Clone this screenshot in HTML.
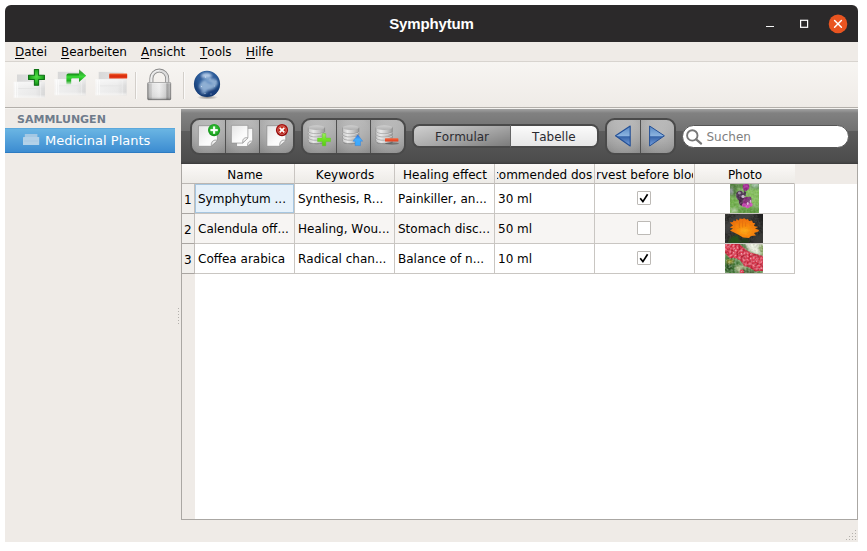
<!DOCTYPE html>
<html lang="de">
<head>
<meta charset="utf-8">
<title>Symphytum</title>
<style>
html,body{margin:0;padding:0;background:#fff;}
body{width:867px;height:551px;position:relative;overflow:hidden;font-family:"DejaVu Sans","Liberation Sans",sans-serif;font-size:12px;color:#000;font-kerning:none;}
*{box-sizing:border-box;}
#win div,#win span,#win svg{position:absolute;}
#win{position:absolute;left:0;top:0;width:867px;height:551px;background:#efebe7;clip-path:inset(5px 9px 9px 5px round 6px 6px 0 0);}
#title{left:0;top:0;width:867px;height:42px;background:#2b292a;}
#title .t{left:5px;width:853px;top:15px;text-align:center;color:#fff;font:bold 15px "Liberation Sans",sans-serif;line-height:17px;letter-spacing:-0.15px;}
#menubar{left:0;top:42px;width:867px;height:19px;background:#efebe7;}
#menubar span{top:3px;line-height:14px;font-size:12px;color:#000;white-space:nowrap;}
#menubar u{text-decoration:underline;text-underline-offset:2px;text-decoration-thickness:1px;}
#tb{left:0;top:61px;width:867px;height:47px;background:linear-gradient(#f7f5f2,#efebe7);border-top:1px solid #d8d4cf;border-bottom:1px solid #b3afaa;}
#hl{left:0;top:108px;width:867px;height:1px;background:#f5f3f0;}
.sep{width:2px;height:27px;top:72px;border-left:1px solid #d3cfca;border-right:1px solid #fbfaf9;}
#side{left:0;top:108px;width:181px;height:443px;background:#efebe7;}
#hdr{left:17px;top:113px;font:bold 11px "DejaVu Sans","Liberation Sans",sans-serif;line-height:14px;color:#6f7c8c;white-space:nowrap;}
#item{left:0;top:128px;width:175px;height:25px;background:linear-gradient(#6ab5e3,#3c8cd1);border-top:1px solid #5ba8dc;border-bottom:1px solid #2d7bc2;}
#item span{left:45px;top:4px;font-size:13px;line-height:16px;color:#fff;white-space:nowrap;}
#dark{left:181px;top:109px;width:686px;height:55px;background:linear-gradient(#a2a2a2 0px,#929292 2px,#818181 4px,#717171 21.5px,#5c5c5c 22.5px,#4c4c4c 52px,#444 54px,#383838 55px);}
.grp{top:118px;height:37px;border:2px solid #4a4a4a;border-radius:9.5px;background:linear-gradient(#b4b4b4,#929292);overflow:hidden;}
.grp i{position:absolute;top:-2px;width:1.4px;height:37px;background:#505050;}
.seg{top:124px;height:24px;border:2px solid #4a4a4a;white-space:nowrap;text-align:center;line-height:22px;font-size:12px;}
#tbl{left:181px;top:164px;width:677px;height:356px;background:#fff;border:1px solid #aaa7a3;border-top:none;}
#tbl .vh{left:0;top:0;width:13px;height:355px;background:#efebe7;}
#tbl .hh{left:0;top:0;width:675px;height:19px;background:#efebe7;}
#tbl .hc{top:0;height:20px;width:100px;background:linear-gradient(#fbf9f7,#edebe7);border-right:1px solid #c9c5c1;border-bottom:1px solid #bab6b2;background-clip:border-box;}
#tbl .hc b{position:absolute;left:2px;right:1px;top:0;height:19px;padding-top:2px;overflow:hidden;font-weight:normal;display:flex;justify-content:center;white-space:nowrap;line-height:19px;}
#tbl .rh{left:0;width:13px;height:30px;background:#f1efec;border-right:1px solid #c2beba;border-bottom:1px solid #a9a5a1;line-height:33px;padding-left:2px;}
#tbl .c{height:30px;width:100px;border-right:1px solid #c9c6c2;border-bottom:1px solid #c9c6c2;line-height:31px;padding-left:3px;white-space:nowrap;overflow:hidden;}
#tbl .sel{width:99px;height:29px;border:1px solid #a6c6e0;background:#e6f1fa;line-height:29px;padding-left:2px;white-space:nowrap;overflow:hidden;}
#tbl .alt{background:#f7f5f3;}
#tbl .cb{width:14px;height:14px;border:1px solid #bdbab6;background:#fff;border-radius:1px;}
</style>
</head>
<body>
<div id="win">
  <div id="title"><div class="t">Symphytum</div>
    <svg style="left:760px;top:10px" width="100" height="28" viewBox="0 0 100 28">
      <rect x="6" y="16" width="8" height="1" fill="#f4f4f4"/>
      <rect x="40.600" y="10.300" width="7" height="7" fill="none" stroke="#fff" stroke-width="1.200"/>
      <circle cx="78" cy="13.900" r="9.300" fill="#e95420"/>
      <line x1="74.6" y1="10.5" x2="81.4" y2="17.300" stroke="#fff" stroke-width="1.500" stroke-linecap="round"/><line x1="81.4" y1="10.5" x2="74.6" y2="17.300" stroke="#fff" stroke-width="1.500" stroke-linecap="round"/>
    </svg>
  </div>
  <div id="menubar">
    <span style="left:15px"><u>D</u>atei</span>
    <span style="left:61px"><u>B</u>earbeiten</span>
    <span style="left:141px"><u>A</u>nsicht</span>
    <span style="left:200px"><u>T</u>ools</span>
    <span style="left:246px"><u>H</u>ilfe</span>
  </div>
  <div id="tb"></div>
  <svg style="left:10px;top:64px" width="220" height="42" viewBox="10 64 220 42">
<defs>
<linearGradient id="tray" x1="0" y1="0" x2="1" y2="0"><stop offset="0" stop-color="#f6f5f4"/><stop offset="0.12" stop-color="#efefef"/><stop offset="0.7" stop-color="#e9e9e9"/><stop offset="1" stop-color="#d6d6d6"/></linearGradient>
<linearGradient id="trayv" x1="0" y1="0" x2="0" y2="1"><stop offset="0" stop-color="#fff" stop-opacity="0.55"/><stop offset="0.4" stop-color="#fff" stop-opacity="0.1"/><stop offset="0.8" stop-color="#fff" stop-opacity="0"/><stop offset="1" stop-color="#f4f2ef" stop-opacity="0.9"/></linearGradient>
<linearGradient id="pap" x1="0" y1="0" x2="1" y2="0"><stop offset="0" stop-color="#d8d8d8"/><stop offset="1" stop-color="#e8e8e8"/></linearGradient>
<radialGradient id="grn" cx="0.5" cy="0.45" r="0.6"><stop offset="0" stop-color="#52e046"/><stop offset="0.55" stop-color="#2ab428"/><stop offset="1" stop-color="#128214"/></radialGradient>
<linearGradient id="grn2" x1="0" y1="0" x2="0" y2="1"><stop offset="0" stop-color="#0e8410"/><stop offset="0.3" stop-color="#3ddc3a"/><stop offset="0.65" stop-color="#1fae20"/><stop offset="1" stop-color="#22b422" stop-opacity="0.15"/></linearGradient>
<linearGradient id="grn3" x1="0" y1="0" x2="0" y2="1"><stop offset="0" stop-color="#7d9a7d"/><stop offset="0.3" stop-color="#2fae2f"/><stop offset="0.6" stop-color="#3cdc3a"/><stop offset="1" stop-color="#128a12"/></linearGradient>
<linearGradient id="red" x1="0" y1="0" x2="0" y2="1"><stop offset="0" stop-color="#f4662e"/><stop offset="0.5" stop-color="#d8280c"/><stop offset="1" stop-color="#e84420"/></linearGradient>
<linearGradient id="lockb" x1="0" y1="0" x2="1" y2="0"><stop offset="0" stop-color="#909090"/><stop offset="0.06" stop-color="#bdbdbd"/><stop offset="0.17" stop-color="#cfcfcf"/><stop offset="0.19" stop-color="#e2e2e2"/><stop offset="0.5" stop-color="#f0f0f0"/><stop offset="0.8" stop-color="#d2d2d2"/><stop offset="0.83" stop-color="#9c9c9c"/><stop offset="0.95" stop-color="#b8b8b8"/><stop offset="1" stop-color="#8c8c8c"/></linearGradient>
<linearGradient id="lockv" x1="0" y1="0" x2="0" y2="1"><stop offset="0" stop-color="#fff" stop-opacity="0.5"/><stop offset="0.1" stop-color="#fff" stop-opacity="0"/><stop offset="0.85" stop-color="#000" stop-opacity="0.05"/><stop offset="1" stop-color="#000" stop-opacity="0.3"/></linearGradient>
<radialGradient id="glb" cx="0.5" cy="0.3" r="0.8"><stop offset="0" stop-color="#5c88bc"/><stop offset="0.4" stop-color="#2a5a98"/><stop offset="0.8" stop-color="#143a72"/><stop offset="1" stop-color="#0c2e60"/></radialGradient>
<radialGradient id="shd" cx="0.5" cy="0.5" r="0.5"><stop offset="0" stop-color="#000" stop-opacity="0.4"/><stop offset="1" stop-color="#000" stop-opacity="0"/></radialGradient>
<clipPath id="gclip"><circle cx="207" cy="83.9" r="13.1"/></clipPath><filter id="gblur" x="-20%" y="-20%" width="140%" height="140%"><feGaussianBlur stdDeviation="1.1"/></filter>
<g id="trayi">
<rect x="3.3" y="0" width="25" height="8" fill="url(#pap)"/>
<rect x="0" y="7.3" width="31.2" height="16.2" fill="url(#tray)"/>
<rect x="0" y="7.3" width="31.2" height="16.2" fill="url(#trayv)"/>
<rect x="1.5" y="8" width="0.8" height="15" fill="#fff" opacity="0.8"/>
<rect x="3.6" y="8" width="0.8" height="15" fill="#fff" opacity="0.7"/>
<rect x="26.4" y="8" width="0.8" height="15" fill="#fff" opacity="0.4"/>
<rect x="4.5" y="13.6" width="22" height="0.8" fill="#e4e4e4"/>
</g>
</defs>
<!-- icon1 -->
<use href="#trayi" x="13.7" y="74.5"/>
<path d="M34.4 69.5h4.2v5.8h5.8v4.2h-5.8v5.8h-4.2v-5.8h-5.8v-4.2h5.8z" fill="url(#grn)" stroke="#0e7214" stroke-width="1.100" stroke-linejoin="round"/>
<!-- icon2 -->
<use href="#trayi" x="54.5" y="71.8"/>
<path d="M66.400 84.600V75.600q0-2 2-2h10.600v4.600h-6.800q-1 0-1 1v5.400z" fill="url(#grn2)"/>
<path d="M79 69.2l7.2 6.5l-7.2 6.2z" fill="url(#grn3)"/>
<!-- icon3 -->
<use href="#trayi" x="95.4" y="71.9"/>
<rect x="109.2" y="73.4" width="18" height="5.1" rx="0.6" fill="url(#red)"/>
<!-- lock -->
<path d="M151.4 83.5V78.5a7.9 7.9 0 0 1 15.8 0V83.5" fill="none" stroke="#888" stroke-width="4"/>
<path d="M151.4 83.5V78.5a7.9 7.9 0 0 1 15.8 0V83.5" fill="none" stroke="#dcdcdc" stroke-width="2.4"/>
<path d="M151.1 83.5V78.5a8.2 8.2 0 0 1 8.2 -8.2" fill="none" stroke="#f6f6f6" stroke-width="1"/>
<rect x="147.7" y="82.500" width="23" height="17.200" rx="0.8" fill="url(#lockb)" stroke="#7e7e7e" stroke-width="0.8"/>
<rect x="147.7" y="82.500" width="23" height="17.200" rx="0.8" fill="url(#lockv)"/>
<!-- globe -->
<ellipse cx="207.5" cy="97.4" rx="10.5" ry="2.2" fill="url(#shd)"/>
<circle cx="207" cy="83.9" r="13.1" fill="url(#glb)"/>
<g clip-path="url(#gclip)"><g filter="url(#gblur)">
<ellipse cx="208.500" cy="84.500" rx="9.500" ry="5.500" transform="rotate(-15 208.500 84.500)" fill="#9fbcdc" opacity="0.85"/>
<ellipse cx="203.500" cy="89" rx="4" ry="5" fill="#8fafd4" opacity="0.8"/>
<ellipse cx="206.500" cy="75.500" rx="5" ry="2.500" fill="#bcd2ec" opacity="0.9"/>
<ellipse cx="214" cy="77.500" rx="2.800" ry="1.800" fill="#2c5f9f" opacity="0.9"/>
<ellipse cx="199.500" cy="78" rx="2.500" ry="3" fill="#2a5a98" opacity="0.8"/>
<ellipse cx="209" cy="82.500" rx="4" ry="0.900" transform="rotate(25 209 82.500)" fill="#4c80bc"/>
<ellipse cx="213" cy="92.500" rx="5" ry="3" fill="#173f7c" opacity="0.8"/>
<ellipse cx="199" cy="91.500" rx="3" ry="3.500" fill="#1b4684" opacity="0.7"/>
</g>
<g fill="#e8f0fa" opacity="0.85"><circle cx="201.500" cy="86.500" r="0.5"/><circle cx="205" cy="93.500" r="0.5"/><circle cx="211" cy="94" r="0.5"/><circle cx="214.500" cy="86" r="0.45"/><circle cx="205.500" cy="77" r="0.6"/><circle cx="210" cy="79" r="0.45"/><circle cx="216" cy="81" r="0.45"/></g>
</g>
</svg>

  <div class="sep" style="left:135px"></div>
  <div class="sep" style="left:183px"></div>
  <div id="side"></div>
  <div id="hdr">SAMMLUNGEN</div>
  <div id="item"><svg style="left:23px;top:5px" width="17" height="12" viewBox="0 0 17 12"><rect x="1.8" y="-0.100" width="12.600" height="4" rx="0.6" fill="#a4c8e3"/><rect x="0" y="3" width="16.200" height="8" rx="0.6" fill="#b2d1e8"/><rect x="1" y="6.600" width="14" height="0.800" fill="#a6c9e4"/></svg><span>Medicinal Plants</span></div>
  <svg style="left:176px;top:306px" width="4" height="20" viewBox="0 0 4 20"><g fill="#b3b0ac"><rect x="2" y="2" width="1" height="1"/><rect x="2" y="5" width="1" height="1"/><rect x="2" y="8" width="1" height="1"/><rect x="2" y="11" width="1" height="1"/><rect x="2" y="14" width="1" height="1"/><rect x="2" y="17" width="1" height="1"/></g></svg>
  <svg style="left:844px;top:528px" width="14" height="14" viewBox="0 0 14 14"><g fill="#b3b0ac"><rect x="11" y="2" width="1" height="1"/><rect x="8" y="5" width="1" height="1"/><rect x="11" y="5" width="1" height="1"/><rect x="5" y="8" width="1" height="1"/><rect x="8" y="8" width="1" height="1"/><rect x="11" y="8" width="1" height="1"/><rect x="2" y="11" width="1" height="1"/><rect x="5" y="11" width="1" height="1"/><rect x="8" y="11" width="1" height="1"/><rect x="11" y="11" width="1" height="1"/></g></svg>
  <div id="dark"></div><div id="hl"></div>
  <div class="grp" style="left:190px;width:104.7px"><b style="position:absolute;left:-2px;top:-2px;width:34.7px;height:37px;background:radial-gradient(ellipse at 55% 45%,rgba(255,255,255,0.22) 0%,rgba(255,255,255,0.06) 55%,rgba(0,0,0,0.10) 100%)"></b><b style="position:absolute;left:32.7px;top:-2px;width:34.2px;height:37px;background:radial-gradient(ellipse at 55% 45%,rgba(255,255,255,0.22) 0%,rgba(255,255,255,0.06) 55%,rgba(0,0,0,0.10) 100%)"></b><b style="position:absolute;left:66.9px;top:-2px;width:35.8px;height:37px;background:radial-gradient(ellipse at 55% 45%,rgba(255,255,255,0.22) 0%,rgba(255,255,255,0.06) 55%,rgba(0,0,0,0.10) 100%)"></b><i style="left:32.7px"></i><i style="left:66.9px"></i></div>
<div class="grp" style="left:301.3px;width:104.5px"><b style="position:absolute;left:-2px;top:-2px;width:34.3px;height:37px;background:radial-gradient(ellipse at 55% 45%,rgba(255,255,255,0.22) 0%,rgba(255,255,255,0.06) 55%,rgba(0,0,0,0.10) 100%)"></b><b style="position:absolute;left:32.3px;top:-2px;width:34.3px;height:37px;background:radial-gradient(ellipse at 55% 45%,rgba(255,255,255,0.22) 0%,rgba(255,255,255,0.06) 55%,rgba(0,0,0,0.10) 100%)"></b><b style="position:absolute;left:66.6px;top:-2px;width:35.900000000000006px;height:37px;background:radial-gradient(ellipse at 55% 45%,rgba(255,255,255,0.22) 0%,rgba(255,255,255,0.06) 55%,rgba(0,0,0,0.10) 100%)"></b><i style="left:32.3px"></i><i style="left:66.6px"></i></div>
<div class="seg" style="left:412px;width:98px;border-radius:7.5px 0 0 7.5px;border-right:none;background:linear-gradient(165deg,#d0d0d0 0%,#aaaaaa 50%,#7c7c7c 100%);color:#2c2c32">Formular</div>
<div class="seg" style="left:510px;width:88.5px;border-radius:0 7.5px 7.5px 0;border-left:1px solid #666;background:linear-gradient(#fbfbfb,#e6e6e6);color:#2a2a30">Tabelle</div>
<div class="grp" style="left:605.3px;width:70.7px"><b style="position:absolute;left:-2px;top:-2px;width:34.7px;height:37px;background:radial-gradient(ellipse at 55% 45%,rgba(255,255,255,0.22) 0%,rgba(255,255,255,0.06) 55%,rgba(0,0,0,0.10) 100%)"></b><b style="position:absolute;left:32.7px;top:-2px;width:36.0px;height:37px;background:radial-gradient(ellipse at 55% 45%,rgba(255,255,255,0.22) 0%,rgba(255,255,255,0.06) 55%,rgba(0,0,0,0.10) 100%)"></b><i style="left:32.7px"></i></div>
<div class="seg" style="left:682px;top:125px;height:23px;width:167px;border-radius:12px;background:#fff;text-align:left;padding-left:23.5px;color:#808080;border-width:1px;border-color:#555">Suchen</div>
<svg style="left:181px;top:108px" width="686" height="56" viewBox="181 108 686 56">
<defs>
<linearGradient id="pg" x1="0" y1="0" x2="1" y2="1"><stop offset="0" stop-color="#e4e4e4"/><stop offset="0.6" stop-color="#fafafa"/><stop offset="1" stop-color="#ffffff"/></linearGradient>
<radialGradient id="gb" cx="0.5" cy="0.45" r="0.55"><stop offset="0" stop-color="#4ad04a"/><stop offset="0.7" stop-color="#22aa26"/><stop offset="1" stop-color="#0e8a14"/></radialGradient>
<radialGradient id="rb" cx="0.5" cy="0.45" r="0.55"><stop offset="0" stop-color="#d8401c"/><stop offset="0.6" stop-color="#b41410"/><stop offset="1" stop-color="#8a0608"/></radialGradient>
<linearGradient id="db" x1="0" y1="0" x2="1" y2="0"><stop offset="0" stop-color="#c6c6c6"/><stop offset="0.3" stop-color="#eaeaea"/><stop offset="0.7" stop-color="#c0c0c0"/><stop offset="1" stop-color="#9a9a9a"/></linearGradient>
<linearGradient id="dbt" x1="0" y1="0" x2="0" y2="1"><stop offset="0" stop-color="#cfcfcf"/><stop offset="1" stop-color="#b0b0b0"/></linearGradient>
<linearGradient id="ar" x1="0" y1="0" x2="0" y2="1"><stop offset="0" stop-color="#5787c4"/><stop offset="0.48" stop-color="#8ab2de"/><stop offset="0.54" stop-color="#3563a8"/><stop offset="1" stop-color="#7ba4e0"/></linearGradient>
<linearGradient id="lg" x1="0" y1="0" x2="0" y2="1"><stop offset="0" stop-color="#9cf060"/><stop offset="0.5" stop-color="#6ee024"/><stop offset="1" stop-color="#58cc14"/></linearGradient>
<linearGradient id="bl" x1="0" y1="0" x2="0" y2="1"><stop offset="0" stop-color="#2c6cd8"/><stop offset="0.4" stop-color="#44acfc"/><stop offset="1" stop-color="#38a8fc"/></linearGradient>
<linearGradient id="rm" x1="0" y1="0" x2="0" y2="1"><stop offset="0" stop-color="#f46840"/><stop offset="1" stop-color="#e03c1c"/></linearGradient>
<filter id="sb" x="-30%" y="-30%" width="160%" height="160%"><feGaussianBlur stdDeviation="0.45"/></filter>
<g id="page"><path d="M0.4 0.4h19v14.6l-6 6H0.4z" fill="url(#pg)" stroke="#8e8e8e" stroke-width="0.8"/><path d="M19.4 15c-3.600-1.400-7 1.600-6 6z" fill="#c9c9c9" stroke="#8e8e8e" stroke-width="0.6"/><path d="M18.4 15.600c-2.400-0.600-4.400 1.200-4.200 3.600z" fill="#f4f4f4"/></g>
<g id="disc"><path d="M0 0v2.400a7.500 2.300 0 0 0 15 0V0z" fill="url(#db)" stroke="#7c7c7c" stroke-width="0.5"/><ellipse cx="7.500" cy="0" rx="7.500" ry="2.300" fill="#e6e6e6"/></g>
<g id="dbi" filter="url(#sb)"><ellipse cx="8" cy="17.400" rx="7.500" ry="1.600" fill="#000" opacity="0.18"/><use href="#disc" y="13.600"/><use href="#disc" y="10.300"/><use href="#disc" y="7"/><path d="M0 2.300v3.800a7.500 2.300 0 0 0 15 0V2.300z" fill="url(#db)" stroke="#6e6e6e" stroke-width="0.4"/><ellipse cx="7.500" cy="2.300" rx="7.500" ry="2.300" fill="url(#dbt)"/></g>
</defs>
<use href="#page" x="198" y="125.300"/>
<circle cx="214.100" cy="130.100" r="6.100" fill="url(#gb)"/>
<rect x="213.050" y="126.400" width="2.100" height="7.400" fill="#fff" opacity="0.95"/><rect x="210.400" y="129.050" width="7.400" height="2.100" fill="#fff" opacity="0.95"/>
<g transform="translate(236.200,128) scale(0.85,0.88)"><use href="#page"/></g>
<g transform="translate(231,125) scale(0.87,0.86)"><use href="#page"/></g>
<use href="#page" x="266.400" y="125.300"/>
<circle cx="282" cy="130.100" r="6.100" fill="url(#rb)"/>
<circle cx="282" cy="130.100" r="4.200" fill="none" stroke="#f0c0b0" stroke-width="0.7" opacity="0.8"/>
<line x1="279.700" y1="127.800" x2="284.300" y2="132.400" stroke="#fff" stroke-width="1.700"/><line x1="284.300" y1="127.800" x2="279.700" y2="132.400" stroke="#fff" stroke-width="1.700"/>
<g transform="translate(308.300,125.300) scale(1.09,1)"><use href="#dbi"/></g>
<path d="M322.300 133.600h3.500v4.500h4.700v3.500h-4.700v4.200h-3.500v-4.200h-4.700v-3.500h4.700z" fill="url(#lg)" stroke="#58c41c" stroke-width="0.4"/>
<g transform="translate(342.600,125.300) scale(1.09,1)"><use href="#dbi"/></g>
<path d="M357.800 134.800l4.900 6.400h-2.200v4.400h-5.400v-4.400h-2.200z" fill="url(#bl)" stroke="#2a78d8" stroke-width="0.4"/>
<g transform="translate(376,125.300) scale(1.09,1)"><use href="#dbi"/></g>
<ellipse cx="392" cy="143.500" rx="7" ry="1.200" fill="#000" opacity="0.3"/>
<rect x="385" y="138.200" width="13.400" height="3.200" rx="0.5" fill="url(#rm)"/>
<path d="M615.500 135.800L630.200 126v20z" fill="url(#ar)" stroke="#234f96" stroke-width="1.100" stroke-linejoin="round"/>
<path d="M664.400 135.800L649.600 126v20z" fill="url(#ar)" stroke="#234f96" stroke-width="1"/>
<circle cx="692.300" cy="135.400" r="5.200" fill="none" stroke="#777" stroke-width="1.900"/>
<path d="M696.200 139.400l4.900 4.200" stroke="#777" stroke-width="2.200" stroke-linecap="round"/>
</svg>
  <div id="tbl">
  <div class="vh"></div><div class="hh" style="height:20px"></div>
  <div class="hc" style="left:0;width:13px;border-right:none"></div>
  <div class="hc" style="left:13px"><b>Name</b></div>
  <div class="hc" style="left:113px"><b>Keywords</b></div>
  <div class="hc" style="left:213px"><b>Healing effect</b></div>
  <div class="hc" style="left:313px"><b><span style="position:relative;left:0.5px">Recommended dosage</span></b></div>
  <div class="hc" style="left:413px"><b>Harvest before bloom</b></div>
  <div class="hc" style="left:513px;border-right-color:transparent"><b>Photo</b></div>
  <div class="rh" style="top:20px">1</div>
  <div class="c" style="left:13px;top:20px"></div><div class="sel" style="left:13px;top:20px">Symphytum ...</div>
  <div class="c" style="left:113px;top:20px">Synthesis, R...</div>
  <div class="c" style="left:213px;top:20px">Painkiller, an...</div>
  <div class="c" style="left:313px;top:20px">30 ml</div>
  <div class="c" style="left:413px;top:20px"></div>
  <div class="cb" style="left:455px;top:27px"><svg width="12" height="12" viewBox="0 0 12 12" style="left:0;top:0"><path d="M2.2 6.2L4.9 9.6L9.6 2.2" fill="none" stroke="#000" stroke-width="1.7"/></svg></div>
  <div class="c" style="left:513px;top:20px"></div>
  <svg style="left:548px;top:20px" width="29" height="29" viewBox="0 0 29 29">
<defs><filter id="b1" x="-30%" y="-30%" width="160%" height="160%"><feGaussianBlur stdDeviation="1.1"/></filter>
<filter id="b2" x="-30%" y="-30%" width="160%" height="160%"><feGaussianBlur stdDeviation="0.6"/></filter>
<filter id="nz1" x="0" y="0" width="100%" height="100%"><feTurbulence type="fractalNoise" baseFrequency="0.45" numOctaves="2" seed="3"/><feColorMatrix type="matrix" values="0 0 0 0 0.5  0 0 0 0 0.5  0 0 0 0 0.5  1.6 1.6 1.6 0 -1.9"/></filter><filter id="nw1" x="0" y="0" width="100%" height="100%"><feTurbulence type="fractalNoise" baseFrequency="0.5" numOctaves="2" seed="11"/><feColorMatrix type="matrix" values="0 0 0 0 1  0 0 0 0 1  0 0 0 0 1  1.8 1.8 1.8 0 -2.3"/></filter><clipPath id="c1"><rect width="29" height="29"/></clipPath></defs>
<rect width="29" height="29" fill="#6dab49"/>
<g clip-path="url(#c1)">
<g filter="url(#b1)">
<rect x="17" y="6" width="14" height="14" fill="#86c25c"/>
<rect x="-2" y="-2" width="9" height="14" fill="#52813f"/>
<rect x="6" y="-2" width="10" height="6" fill="#5a8a44"/>
<rect x="21" y="-2" width="10" height="7" fill="#6e9e66"/>
<ellipse cx="25" cy="1" rx="3" ry="1.5" fill="#b9d8c0"/>
<rect x="-2" y="13" width="9" height="10" fill="#6fb048"/>
<ellipse cx="4" cy="26.5" rx="3" ry="2" fill="#b4d4a0"/>
<rect x="8" y="24" width="22" height="6" fill="#5e9c40"/>
<ellipse cx="1" cy="7" rx="1.5" ry="3" fill="#a9a8b8"/>
</g>
<g filter="url(#b2)">
<ellipse cx="16" cy="2.8" rx="3.3" ry="3.3" fill="#a82c98"/>
<ellipse cx="15.5" cy="5.5" rx="2" ry="1.5" fill="#8c2c80"/>
<ellipse cx="10" cy="11.5" rx="4" ry="4.8" fill="#4e3252"/>
<ellipse cx="9.5" cy="9" rx="1.5" ry="1.5" fill="#9a86a4"/>
<ellipse cx="12.2" cy="17" rx="3.4" ry="5" fill="#48264a"/>
<ellipse cx="14.8" cy="9.6" rx="1.3" ry="2.6" fill="#4a3050"/>
<ellipse cx="13" cy="12.5" rx="1.6" ry="1.8" fill="#c8b4cc"/>
<ellipse cx="16.8" cy="17.8" rx="3.8" ry="5" fill="#862a78"/>
<ellipse cx="19.5" cy="16" rx="2" ry="3.5" fill="#7a3a78"/>
<ellipse cx="14" cy="21" rx="2.2" ry="2" fill="#c43cac"/>
<ellipse cx="17.5" cy="22.4" rx="2.4" ry="1.8" fill="#d048b8"/>
<ellipse cx="20.8" cy="20.6" rx="1.8" ry="2.2" fill="#cc50b8"/>
<ellipse cx="17.8" cy="19.5" rx="1" ry="1.6" fill="#ecc0e4"/>
<ellipse cx="20.5" cy="17.5" rx="0.8" ry="1.4" fill="#e4b0dc"/>
</g>
<rect width="29" height="29" filter="url(#nz1)" fill="#000" opacity="0.3" style="mix-blend-mode:multiply"/>
<rect width="29" height="29" filter="url(#nw1)" fill="#fff" opacity="0.15"/>
</g>
</svg>
  <div class="rh" style="top:50px">2</div>
  <div class="c alt" style="left:13px;top:50px">Calendula off...</div>
  <div class="c alt" style="left:113px;top:50px">Healing, Wou...</div>
  <div class="c alt" style="left:213px;top:50px">Stomach disc...</div>
  <div class="c alt" style="left:313px;top:50px">50 ml</div>
  <div class="c alt" style="left:413px;top:50px"></div>
  <div class="cb" style="left:455px;top:57px"></div>
  <div class="c alt" style="left:513px;top:50px"></div>
  <svg style="left:543px;top:50px" width="38" height="29" viewBox="0 0 38 29">
<defs><filter id="b3" x="-30%" y="-30%" width="160%" height="160%"><feGaussianBlur stdDeviation="1.2"/></filter>
<filter id="b4" x="-30%" y="-30%" width="160%" height="160%"><feGaussianBlur stdDeviation="0.45"/></filter>
<radialGradient id="og" cx="0.5" cy="0.65" r="0.6"><stop offset="0" stop-color="#ffae18"/><stop offset="0.45" stop-color="#fb8a0c"/><stop offset="1" stop-color="#f07008"/></radialGradient>
<filter id="nz2" x="0" y="0" width="100%" height="100%"><feTurbulence type="fractalNoise" baseFrequency="0.45" numOctaves="2" seed="5"/><feColorMatrix type="matrix" values="0 0 0 0 0.5  0 0 0 0 0.5  0 0 0 0 0.5  1.6 1.6 1.6 0 -1.9"/></filter><filter id="nw2" x="0" y="0" width="100%" height="100%"><feTurbulence type="fractalNoise" baseFrequency="0.5" numOctaves="2" seed="12"/><feColorMatrix type="matrix" values="0 0 0 0 1  0 0 0 0 1  0 0 0 0 1  1.8 1.8 1.8 0 -2.3"/></filter><clipPath id="c2"><rect width="38" height="29"/></clipPath></defs>
<rect width="38" height="29" fill="#282826"/>
<g clip-path="url(#c2)">
<g filter="url(#b3)">
<path d="M16 -2L34 -2L0 20L0 10Z" fill="#454543" opacity="0.8"/>
<path d="M30 -2L40 -2L40 12Z" fill="#222220"/>
<path d="M30 22L40 18L40 30L28 30Z" fill="#3a3a38"/>
<path d="M3 30L6 23L13 21L16 30Z" fill="#27531d"/>
<path d="M16 30L17 24L24 25L24 30Z" fill="#22401c"/>
</g>
<g filter="url(#b4)">
<path d="M4.7 8.5L8 8L8.5 6.5L11 7L11.5 5L14 6.5L14.5 4.5L18 5L19 3.9L21 5.5L23 5L24 7L27 6.5L28 9L30 9L29 12L33 13L30 14.5L34 16L33.5 17.5L29 19L31 21.5L26 22L24 24L18 23.5L14 21L10 19L5 16.5L8 14.5L4.7 13.5L8 11.5Z" fill="url(#og)"/>
<path d="M14.500 7v7" stroke="#e46c08" stroke-width="0.8" fill="none" opacity="0.7"/><path d="M17.500 6.500v7" stroke="#e46c08" stroke-width="0.8" fill="none" opacity="0.7"/><path d="M20.500 8v5" stroke="#e46c08" stroke-width="0.8" fill="none" opacity="0.7"/>
</g>
<rect width="38" height="29" filter="url(#nz2)" fill="#000" opacity="0.14" style="mix-blend-mode:multiply"/>
</g>
</svg>
  <div class="rh" style="top:80px">3</div>
  <div class="c" style="left:13px;top:80px">Coffea arabica</div>
  <div class="c" style="left:113px;top:80px">Radical chan...</div>
  <div class="c" style="left:213px;top:80px">Balance of n...</div>
  <div class="c" style="left:313px;top:80px">10 ml</div>
  <div class="c" style="left:413px;top:80px"></div>
  <div class="cb" style="left:455px;top:87px"><svg width="12" height="12" viewBox="0 0 12 12" style="left:0;top:0"><path d="M2.2 6.2L4.9 9.6L9.6 2.2" fill="none" stroke="#000" stroke-width="1.7"/></svg></div>
  <div class="c" style="left:513px;top:80px"></div>
  <svg style="left:543px;top:80px" width="38" height="29" viewBox="0 0 38 29">
<defs><filter id="b5" x="-30%" y="-30%" width="160%" height="160%"><feGaussianBlur stdDeviation="1"/></filter>
<filter id="b6" x="-30%" y="-30%" width="160%" height="160%"><feGaussianBlur stdDeviation="0.35"/></filter>
<radialGradient id="bg" cx="0.45" cy="0.4" r="0.6"><stop offset="0" stop-color="#f8a8b4"/><stop offset="0.3" stop-color="#ee4a62"/><stop offset="0.75" stop-color="#d8283e"/><stop offset="1" stop-color="#a81c2c"/></radialGradient>
<filter id="nz3" x="0" y="0" width="100%" height="100%"><feTurbulence type="fractalNoise" baseFrequency="0.45" numOctaves="2" seed="7"/><feColorMatrix type="matrix" values="0 0 0 0 0.5  0 0 0 0 0.5  0 0 0 0 0.5  1.6 1.6 1.6 0 -1.9"/></filter><filter id="nw3" x="0" y="0" width="100%" height="100%"><feTurbulence type="fractalNoise" baseFrequency="0.5" numOctaves="2" seed="13"/><feColorMatrix type="matrix" values="0 0 0 0 1  0 0 0 0 1  0 0 0 0 1  1.8 1.8 1.8 0 -2.3"/></filter><clipPath id="c3"><rect width="38" height="29"/></clipPath></defs>
<rect width="38" height="29" fill="#5d8a44"/>
<g clip-path="url(#c3)">
<g filter="url(#b5)">
<path d="M16 -2L40 -2L40 12L30 10L22 5Z" fill="#eef2e0"/>
<path d="M13 -1L20 -1L24 6L18 5Z" fill="#4f7c3c"/>
<path d="M33 2L40 0L40 12L35 10Z" fill="#8aa860"/>
<path d="M-2 11L8 14L15 19L16 30L-2 30Z" fill="#3f7a34"/>
<path d="M0 20L6 18L8 26L0 28Z" fill="#2d5a28"/>
<path d="M10 22L20 22L22 27L12 28Z" fill="#b8c890"/>
<path d="M2 16L8 16L8 19L2 19Z" fill="#a8a030"/>
<path d="M16 24L30 26L30 30L16 30Z" fill="#4a6a38"/>
</g>
<g filter="url(#b6)">
<path d="M-1 -1L13 -1L24 8L38 12L39 27L30 27L18 20L14 15L4 13L-1 8Z" fill="#cc2a40"/>
<circle cx="1.6" cy="1.7" r="2.3" fill="url(#bg)"/><circle cx="5.5" cy="1.1" r="2.3" fill="url(#bg)"/><circle cx="8.9" cy="2.3" r="2.3" fill="url(#bg)"/><circle cx="12.3" cy="4.2" r="2.3" fill="url(#bg)"/><circle cx="1.3" cy="5.9" r="2.3" fill="url(#bg)"/><circle cx="6.1" cy="4.8" r="2.3" fill="url(#bg)"/><circle cx="9.7" cy="5.1" r="2.3" fill="url(#bg)"/><circle cx="5.5" cy="8.2" r="2.3" fill="url(#bg)"/><circle cx="8.9" cy="9" r="2.3" fill="url(#bg)"/><circle cx="12.8" cy="8.4" r="2.3" fill="url(#bg)"/><circle cx="16.5" cy="7.3" r="2.3" fill="url(#bg)"/><circle cx="6.1" cy="12.1" r="2.3" fill="url(#bg)"/><circle cx="10.6" cy="12.1" r="2.3" fill="url(#bg)"/><circle cx="14.5" cy="13.8" r="2.3" fill="url(#bg)"/><circle cx="16.8" cy="10.1" r="2.3" fill="url(#bg)"/><circle cx="19.6" cy="9.6" r="2.3" fill="url(#bg)"/><circle cx="22.4" cy="12.4" r="2.3" fill="url(#bg)"/><circle cx="26" cy="11" r="2.3" fill="url(#bg)"/><circle cx="19" cy="16.3" r="2.3" fill="url(#bg)"/><circle cx="22.4" cy="16.3" r="2.3" fill="url(#bg)"/><circle cx="25.8" cy="15.2" r="2.3" fill="url(#bg)"/><circle cx="29.1" cy="14.6" r="2.3" fill="url(#bg)"/><circle cx="32.2" cy="15.2" r="2.3" fill="url(#bg)"/><circle cx="36.2" cy="15.2" r="2.3" fill="url(#bg)"/><circle cx="20.7" cy="20.5" r="2.3" fill="url(#bg)"/><circle cx="25.2" cy="19.7" r="2.3" fill="url(#bg)"/><circle cx="28.6" cy="22" r="2.3" fill="url(#bg)"/><circle cx="32" cy="18" r="2.3" fill="url(#bg)"/><circle cx="34.2" cy="22" r="2.3" fill="url(#bg)"/><circle cx="36.5" cy="18.6" r="2.3" fill="url(#bg)"/><circle cx="31.4" cy="25.3" r="2.3" fill="url(#bg)"/><circle cx="36.5" cy="24.8" r="2.3" fill="url(#bg)"/><circle cx="16.8" cy="27.9" r="2.3" fill="url(#bg)"/><circle cx="3" cy="3.5" r="2.3" fill="url(#bg)"/><circle cx="11" cy="7" r="2.3" fill="url(#bg)"/><circle cx="23" cy="9.5" r="2.3" fill="url(#bg)"/><circle cx="29" cy="18" r="2.3" fill="url(#bg)"/>
</g>
<rect width="38" height="29" filter="url(#nz3)" fill="#000" opacity="0.45" style="mix-blend-mode:multiply"/>
<rect width="38" height="29" filter="url(#nw3)" fill="#fff" opacity="0.28"/>
</g>
</svg>
  </div>
</div>
</body>
</html>
